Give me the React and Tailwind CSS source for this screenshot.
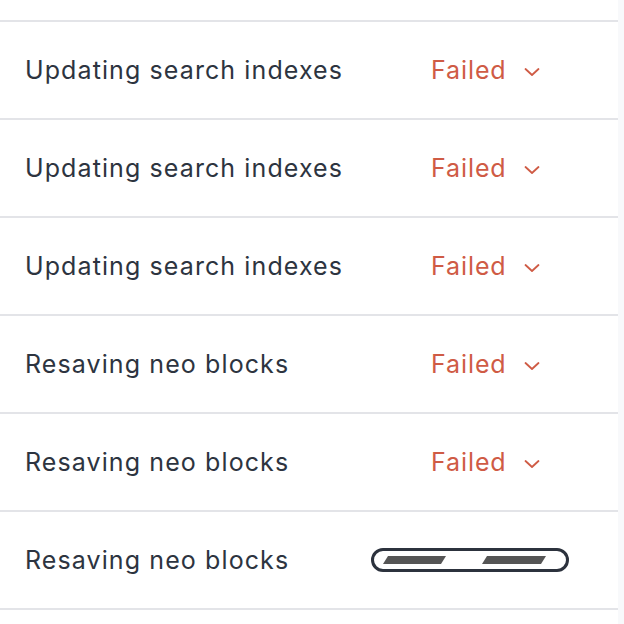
import React from 'react';

const rows = [
  { label: 'Updating search indexes', status: 'failed' },
  { label: 'Updating search indexes', status: 'failed' },
  { label: 'Updating search indexes', status: 'failed' },
  { label: 'Resaving neo blocks', status: 'failed' },
  { label: 'Resaving neo blocks', status: 'failed' },
  { label: 'Resaving neo blocks', status: 'running' },
];

function Chevron() {
  return (
    <svg width="16" height="10" viewBox="0 0 16 10" fill="none" className="ml-[17px] mt-[2px]">
      <path d="M1.5 2l6.5 6 6.5-6" stroke="#cf5b45" strokeWidth="1.8" strokeLinecap="round" strokeLinejoin="round" />
    </svg>
  );
}

function ProgressBar() {
  return (
    <div className="h-[24px] w-[198px] rounded-full border-[3px] border-[#2c323d] overflow-hidden bg-white">
      <svg width="192" height="18" viewBox="0 0 192 18">
        <polygon points="14,5 72,5 67,13 9,13" fill="#555555" />
        <polygon points="113,5 172,5 167,13 108,13" fill="#555555" />
      </svg>
    </div>
  );
}

export default function App() {
  return (
    <div className="min-h-screen bg-[#f8f9fb] font-['Inter',sans-serif]">
      <div className="w-[618px] min-h-screen bg-white pt-[20px]">
        {rows.map((row, i) => (
          <div key={i} className="flex items-center h-[98px] border-t-2 border-[#e3e4e8] pl-[25px]">
            <div className="w-[346px] text-[25px] text-[#2d3440] tracking-[1.1px] pt-[1px]">{row.label}</div>
            {row.status === 'failed' ? (
              <div className="flex items-center ml-[60px] text-[25px] tracking-[0.9px] text-[#cf5b45] pt-[1px]">
                Failed
                <Chevron />
              </div>
            ) : (
              <ProgressBar />
            )}
          </div>
        ))}
        <div className="border-t-2 border-[#e3e4e8]" />
      </div>
    </div>
  );
}
